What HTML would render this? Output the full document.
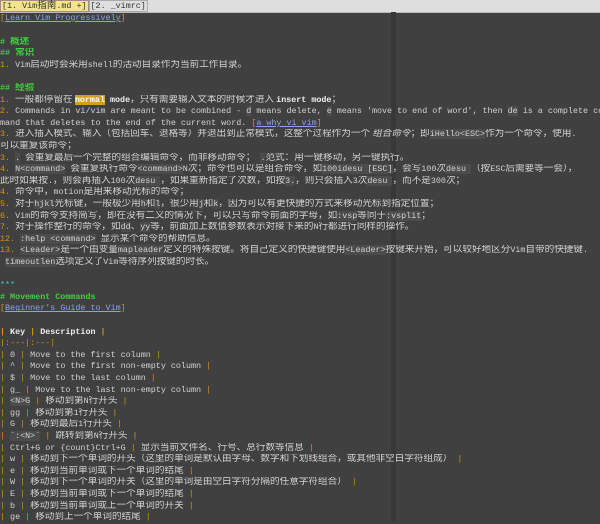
<!DOCTYPE html><html><head><meta charset="utf-8"><style>
body{margin:0;width:600px;height:521px;background:#404040;overflow:hidden;position:relative;font-family:"Liberation Mono",monospace;font-size:8.4px;color:#d2d2d2}
.cc{position:absolute;left:391px;top:12px;width:5px;height:509px;background:#383838}
.r{position:absolute;left:0;height:11.58px;line-height:11.58px;white-space:pre;overflow:hidden;width:600px}
i{font-style:normal;font-family:"Noto Sans CJK SC","WenQuanYi Zen Hei",sans-serif;font-size:9.6px;line-height:0}
.o{color:#d8920c}.g{color:#3fcf3f;font-weight:bold}.l{color:#8aa4ea;text-decoration:underline}
.b{font-weight:bold;color:#eee}.hl{background:#d4a017;color:#fff;font-weight:bold}
.k{background:#4c4c4c}.cy{color:#3cc}
#tab{position:absolute;left:0;top:0;width:600px;height:12px;background:#dedede;border-bottom:1px solid #bbb;line-height:12px;white-space:pre;color:#333;overflow:hidden}
#tab span{display:inline-block;height:10px;line-height:10px}
</style></head><body>
<div id="tab"><span style="background:#f2e48a;border:1px solid #a88;padding:0 1px">[1. Vim<i>指南</i>.md +]</span><span style="padding:0 1px;border:1px solid #aaa">[2. _vimrc]</span></div>
<div class="cc"></div>
<div class="r" style="top:13px"><span class="o">[</span><span class="l">Learn Vim Progressively</span><span class="o">]</span></div>
<div class="r g" style="top:36.7px"># <i>概述</i></div>
<div class="r g" style="top:48.3px">## <i>常识</i></div>
<div class="r" style="top:59.9px"><span class="o">1.</span> Vim<i>启动时会采用</i>shell<i>的活动目录作为当前工作目录。</i></div>
<div class="r g" style="top:83px">## <i>经验</i></div>
<div class="r" style="top:94.6px"><span class="o">1.</span> <i>一般都停留在 </i><span class="hl">normal</span> <span class="b">mode</span><i>，只有需要输入文本的时候才进入 </i><span class="b">insert mode</span><i>；</i></div>
<div class="r" style="top:106.2px"><span class="o">2.</span> Commands in vi/vim are meant to be combined - <span class="k">d</span> means delete, <span class="k">e</span> means 'move to end of word', then <span class="k">de</span> is a complete com</div>
<div class="r" style="top:117.8px">mand that deletes to the end of the current word. <span class="o">[</span><span class="l">a why vi vim</span><span class="o">]</span></div>
<div class="r" style="top:129.4px"><span class="o">3.</span> <i>进入插入模式、输入（包括回车、退格等）并退出到正常模式，这整个过程作为一个 </i><i style="font-style:italic">组合命令</i><i>；即</i><span class="k">iHello&lt;ESC&gt;</span><i>作为一个命令，使用</i>.</div>
<div class="r" style="top:141px"><i>可以重复该命令；</i></div>
<div class="r" style="top:152.6px"><span class="o">3.</span> <span class="k">.</span> <i>会重复最后一个完整的组合编辑命令，而非移动命令；</i> <span class="k">.</span><i>范式：用一键移动，另一键执行。</i></div>
<div class="r" style="top:164.2px"><span class="o">4.</span> <span class="k">N&lt;command&gt;</span> <i>会重复执行命令</i><span class="k">&lt;command&gt;</span>N<i>次；命令也可以是组合命令，如</i><span class="k">100idesu [ESC]</span><i>，会写</i>100<i>次</i><span class="k">desu </span><i>（按</i>ESC<i>后需要等一会），</i></div>
<div class="r" style="top:175.8px"><i>此时如果按</i>.<i>，则会再插入</i>100<i>次</i><span class="k">desu </span><i>，如果重新指定了次数，如按</i><span class="k">3.</span><i>，则只会插入</i>3<i>次</i><span class="k">desu </span><i>，而不是</i>300<i>次；</i></div>
<div class="r" style="top:187.4px"><span class="o">4.</span> <i>命令中，</i>motion<i>是用来移动光标的命令；</i></div>
<div class="r" style="top:199px"><span class="o">5.</span> <i>对于</i><span class="k">hjkl</span><i>光标键，一般极少用</i><span class="k">h</span><i>和</i><span class="k">l</span><i>，很少用</i><span class="k">j</span><i>和</i><span class="k">k</span><i>，因为可以有更快捷的方式来移动光标到指定位置；</i></div>
<div class="r" style="top:210.6px"><span class="o">6.</span> Vim<i>的命令支持简写，即在没有二义的情况下，可以只写命令前面的字母，如</i><span class="k">:vsp</span><i>等同于</i><span class="k">:vsplit</span><i>；</i></div>
<div class="r" style="top:222.2px"><span class="o">7.</span> <i>对于操作整行的命令，如</i><span class="k">dd</span><i>、</i><span class="k">yy</span><i>等，前面加上数值参数表示对接下来的</i>N<i>行都进行同样的操作。</i></div>
<div class="r" style="top:233.8px"><span class="o">12.</span> <span class="k">:help &lt;command&gt;</span> <i>显示某个命令的帮助信息。</i></div>
<div class="r" style="top:245.4px"><span class="o">13.</span> <span class="k">&lt;Leader&gt;</span><i>是一个由变量</i><span class="k">mapleader</span><i>定义的特殊按键。将自己定义的快捷键使用</i><span class="k">&lt;Leader&gt;</span><i>按键来开始，可以较好地区分</i>Vim<i>自带的快捷键</i>.</div>
<div class="r" style="top:257px"> <span class="k">timeoutlen</span><i>选项定义了</i>Vim<i>等待序列按键的时长。</i></div>
<div class="r cy" style="top:280.2px">***</div>
<div class="r g" style="top:291.8px"># Movement Commands</div>
<div class="r" style="top:303.4px"><span class="o">[</span><span class="l">Beginner's Guide to Vim</span><span class="o">]</span></div>
<div class="r b" style="top:326.6px"><span class="o">|</span> Key <span class="o">|</span> Description <span class="o">|</span></div>
<div class="r o" style="top:338.2px">|:---|:---|</div>
<div class="r" style="top:349.8px"><span class="o">|</span> 0 <span class="o">|</span> Move to the first column <span class="o">|</span></div>
<div class="r" style="top:361.4px"><span class="o">|</span> ^ <span class="o">|</span> Move to the first non-empty column <span class="o">|</span></div>
<div class="r" style="top:373px"><span class="o">|</span> $ <span class="o">|</span> Move to the last column <span class="o">|</span></div>
<div class="r" style="top:384.6px"><span class="o">|</span> g_ <span class="o">|</span> Move to the last non-empty column <span class="o">|</span></div>
<div class="r" style="top:396.2px"><span class="o">|</span> <span class="k">&lt;N&gt;G</span> <span class="o">|</span> <i>移动到第</i>N<i>行开头</i> <span class="o">|</span></div>
<div class="r" style="top:407.8px"><span class="o">|</span> gg <span class="o">|</span> <i>移动到第</i>1<i>行开头</i> <span class="o">|</span></div>
<div class="r" style="top:419.4px"><span class="o">|</span> G <span class="o">|</span> <i>移动到最后</i>1<i>行开头</i> <span class="o">|</span></div>
<div class="r" style="top:431px"><span class="o">|</span> <span class="k">`:&lt;N&gt;`</span> <span class="o">|</span> <i>跳转到第</i>N<i>行开头</i> <span class="o">|</span></div>
<div class="r" style="top:442.6px"><span class="o">|</span> Ctrl+G or {count}Ctrl+G <span class="o">|</span> <i>显示当前文件名、行号、总行数等信息</i> <span class="o">|</span></div>
<div class="r" style="top:454.2px"><span class="o">|</span> w <span class="o">|</span> <i>移动到下一个单词的开头（这里的单词是默认由字母、数字和下划线组合，或其他非空白字符组成）</i> <span class="o">|</span></div>
<div class="r" style="top:465.8px"><span class="o">|</span> e <span class="o">|</span> <i>移动到当前单词或下一个单词的结尾</i> <span class="o">|</span></div>
<div class="r" style="top:477.4px"><span class="o">|</span> W <span class="o">|</span> <i>移动到下一个单词的开关（这里的单词是由空白字符分隔的任意字符组合）</i> <span class="o">|</span></div>
<div class="r" style="top:489px"><span class="o">|</span> E <span class="o">|</span> <i>移动到当前单词或下一个单词的结尾</i> <span class="o">|</span></div>
<div class="r" style="top:500.6px"><span class="o">|</span> b <span class="o">|</span> <i>移动到当前单词或上一个单词的开关</i> <span class="o">|</span></div>
<div class="r" style="top:512.2px"><span class="o">|</span> ge <span class="o">|</span> <i>移动到上一个单词的结尾</i> <span class="o">|</span></div>
</body></html>
